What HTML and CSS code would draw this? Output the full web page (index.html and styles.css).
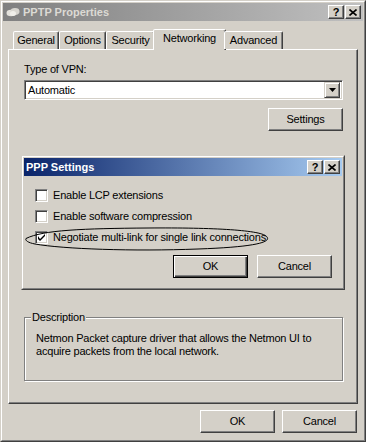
FILE: index.html
```html
<!DOCTYPE html>
<html>
<head>
<meta charset="utf-8">
<link rel="stylesheet" href="styles.css">
</head>
<body>
<div class="window">
  <div class="frame">
    <div class="titlebar inactive">
      <svg class="app-icon" width="14" height="10" viewBox="0 0 14 10">
        <ellipse cx="5" cy="6" rx="4.5" ry="3.2" fill="#e4e2dc"/>
        <ellipse cx="9" cy="4.5" rx="4.5" ry="3.4" fill="#d8d6d0"/>
        <ellipse cx="7" cy="6.5" rx="3" ry="2.5" fill="#f0efea"/>
      </svg>
      <span class="title">PPTP Properties</span>
      <div class="title-btns">
        <span class="tbtn help">?</span>
        <span class="tbtn close"><svg width="8" height="7" viewBox="0 0 8 7"><path d="M0.5 0.5 L7.5 6.5 M7.5 0.5 L0.5 6.5" stroke="#000" stroke-width="1.6"/></svg></span>
      </div>
    </div>
    <div class="content">
      <div class="tabs">
        <div class="tab t-general">General</div>
        <div class="tab t-options">Options</div>
        <div class="tab t-security">Security</div>
        <div class="tab active t-networking">Networking</div>
        <div class="tab t-advanced">Advanced</div>
      </div>
      <div class="panel">
        <div class="label">Type of VPN:</div>
        <div class="combo">
          <span class="combo-text">Automatic</span>
          <span class="combo-btn"><svg width="7" height="4" viewBox="0 0 7 4"><path d="M0 0 H7 L3.5 4 Z" fill="#000"/></svg></span>
        </div>
        <div class="row-right"><span class="btn">Settings</span></div>
        <fieldset class="group">
          <legend>Description</legend>
          <p class="desc">Netmon Packet capture driver that allows the Netmon UI to<br>acquire packets from the local network.</p>
        </fieldset>
      </div>
      <div class="buttons">
        <span class="btn">OK</span>
        <span class="btn">Cancel</span>
      </div>
    </div>
  </div>

  <div class="dialog">
    <div class="dlg-frame">
      <div class="titlebar active-title">
        <span class="title dlg-title">PPP Settings</span>
        <div class="title-btns">
          <span class="tbtn help">?</span>
          <span class="tbtn close"><svg width="8" height="7" viewBox="0 0 8 7"><path d="M0.5 0.5 L7.5 6.5 M7.5 0.5 L0.5 6.5" stroke="#000" stroke-width="1.6"/></svg></span>
        </div>
      </div>
      <div class="dlg-body">
        <div class="check-row"><span class="checkbox"></span><span>Enable LCP extensions</span></div>
        <div class="check-row"><span class="checkbox"></span><span>Enable software compression</span></div>
        <div class="check-row"><span class="checkbox"><svg width="7" height="7" viewBox="0 0 7 7"><path d="M0 2 L0 5 L2 7 L7 2 L7 0 L2 5 Z" fill="#000"/></svg></span><span>Negotiate multi-link for single link connections</span></div>
        <div class="dlg-buttons">
          <span class="btn default">OK</span>
          <span class="btn">Cancel</span>
        </div>
      </div>
    </div>
  </div>

  <svg class="mark" width="252" height="30" viewBox="0 0 252 30">
    <path d="M3 14.5 C 20 6, 60 4.5, 125 4 C 190 3.5, 240 6, 244 13 C 248 18, 233 23, 175 25 C 110 27.5, 40 25, 12 20 C 4 18.5, 2 16, 3 14.5 Z" fill="none" stroke="#000" stroke-width="1"/>
  </svg>
</div>
</body>
</html>
```
FILE: styles.css
```css
* { box-sizing: border-box; }

body {
  margin: 0;
  background: #d4d0c8;
  font-family: "Liberation Sans", Arial, sans-serif;
  font-size: 11px;
  line-height: 13px;
  letter-spacing: -0.2px;
  color: #000;
}

.window {
  position: relative;
  width: 366px;
  height: 442px;
  border: 1px solid;
  border-color: #d4d0c8 #404040 #404040 #d4d0c8;
}

.frame {
  height: 100%;
  border: 1px solid;
  border-color: #fff #808080 #808080 #fff;
  padding: 1px;
  display: flex;
  flex-direction: column;
}

.titlebar {
  height: 18px;
  display: flex;
  align-items: center;
  padding: 0 2px 0 2px;
  flex: none;
}

.titlebar.inactive {
  background: linear-gradient(to right, #808080, #c0c0c0);
  color: #dcdad4;
}

.titlebar.active-title {
  background: linear-gradient(to right, #0a246a, #a6caf0);
  color: #fff;
}

.app-icon { margin-right: 3px; margin-left: 1px; }

.title {
  font-weight: bold;
  flex: 1;
  white-space: nowrap;
  letter-spacing: 0;
}

.title-btns {
  display: flex;
  gap: 1px;
}

.tbtn {
  width: 16px;
  height: 14px;
  background: #d4d0c8;
  border: 1px solid;
  border-color: #fff #404040 #404040 #fff;
  box-shadow: inset -1px -1px #808080;
  display: flex;
  align-items: center;
  justify-content: center;
  font-weight: bold;
  color: #000;
  font-size: 11px;
  line-height: 11px;
  letter-spacing: 0;
}

.content {
  flex: 1;
  display: flex;
  flex-direction: column;
  padding: 8px 5px 0 5px;
}

.tabs {
  height: 20px;
  display: flex;
  align-items: flex-end;
  padding-left: 5px;
  position: relative;
  z-index: 1;
}

.tab {
  height: 18px;
  border: 1px solid;
  border-bottom: none;
  border-color: #fff #404040 transparent #fff;
  box-shadow: inset -1px 0 #808080;
  border-radius: 2px 2px 0 0;
  padding-top: 2px;
  text-align: center;
  background: #d4d0c8;
}

.tab.active {
  height: 21px;
  margin: 0 -2px -1px;
}

.t-general { width: 46px; }
.t-options { width: 47px; }
.t-security { width: 49px; }
.t-networking { width: 73px; }
.t-advanced { width: 59px; }

.panel {
  height: 355px;
  border: 1px solid;
  border-color: #fff #404040 #404040 #fff;
  box-shadow: inset -1px -1px #808080;
  padding: 13px 14px 22px 15px;
  display: flex;
  flex-direction: column;
}

.combo {
  margin-top: 4px;
  height: 20px;
  background: #fff;
  border: 1px solid;
  border-color: #808080 #fff #fff #808080;
  box-shadow: inset 1px 1px #404040, inset -1px -1px #d4d0c8;
  display: flex;
  align-items: center;
  padding: 2px 2px 2px 3px;
}

.combo-text { flex: 1; }

.combo-btn {
  width: 16px;
  height: 16px;
  background: #d4d0c8;
  border: 1px solid;
  border-color: #d4d0c8 #404040 #404040 #d4d0c8;
  box-shadow: inset 1px 1px #fff, inset -1px -1px #808080;
  display: flex;
  align-items: center;
  justify-content: center;
}

.row-right {
  display: flex;
  justify-content: flex-end;
  margin-top: 8px;
}

.btn {
  width: 75px;
  height: 23px;
  background: #d4d0c8;
  border: 1px solid;
  border-color: #fff #404040 #404040 #fff;
  box-shadow: inset -1px -1px #808080;
  display: flex;
  align-items: center;
  justify-content: center;
}

.btn.default {
  border-color: #000;
  box-shadow: inset 1px 1px #fff, inset -1px -1px #404040, inset -2px -2px #808080;
}

.group {
  margin: auto 0 0 0;
  height: 70px;
  border: 1px solid #808080;
  box-shadow: inset 1px 1px #fff, 1px 1px #fff;
  padding: 0 0 0 11px;
}

.group legend {
  margin-left: -5px;
  padding: 0 1px;
  background: #d4d0c8;
  line-height: 13px;
}

.desc {
  margin: 8px 0 0 0;
}

.buttons {
  display: flex;
  justify-content: flex-end;
  gap: 7px;
  margin-top: 6px;
  margin-right: 1px;
}

.dialog {
  position: absolute;
  left: 20px;
  top: 154px;
  width: 324px;
  height: 135px;
  border: 1px solid;
  border-color: #d4d0c8 #404040 #404040 #d4d0c8;
}

.dlg-frame {
  height: 100%;
  border: 1px solid;
  border-color: #fff #808080 #808080 #fff;
  padding: 1px;
  background: #d4d0c8;
}

.dlg-body {
  padding: 13px 10px 0 11px;
  display: flex;
  flex-direction: column;
  gap: 8px;
}

.check-row {
  display: flex;
  align-items: center;
  gap: 5px;
  height: 13px;
}

.checkbox {
  width: 13px;
  height: 13px;
  background: #fff;
  border: 1px solid;
  border-color: #808080 #fff #fff #808080;
  box-shadow: inset 1px 1px #404040, inset -1px -1px #d4d0c8;
  display: flex;
  align-items: center;
  justify-content: center;
}

.dlg-buttons {
  display: flex;
  justify-content: flex-end;
  gap: 9px;
  margin-top: 3px;
}

.mark {
  position: absolute;
  left: 22px;
  top: 223px;
}
```
